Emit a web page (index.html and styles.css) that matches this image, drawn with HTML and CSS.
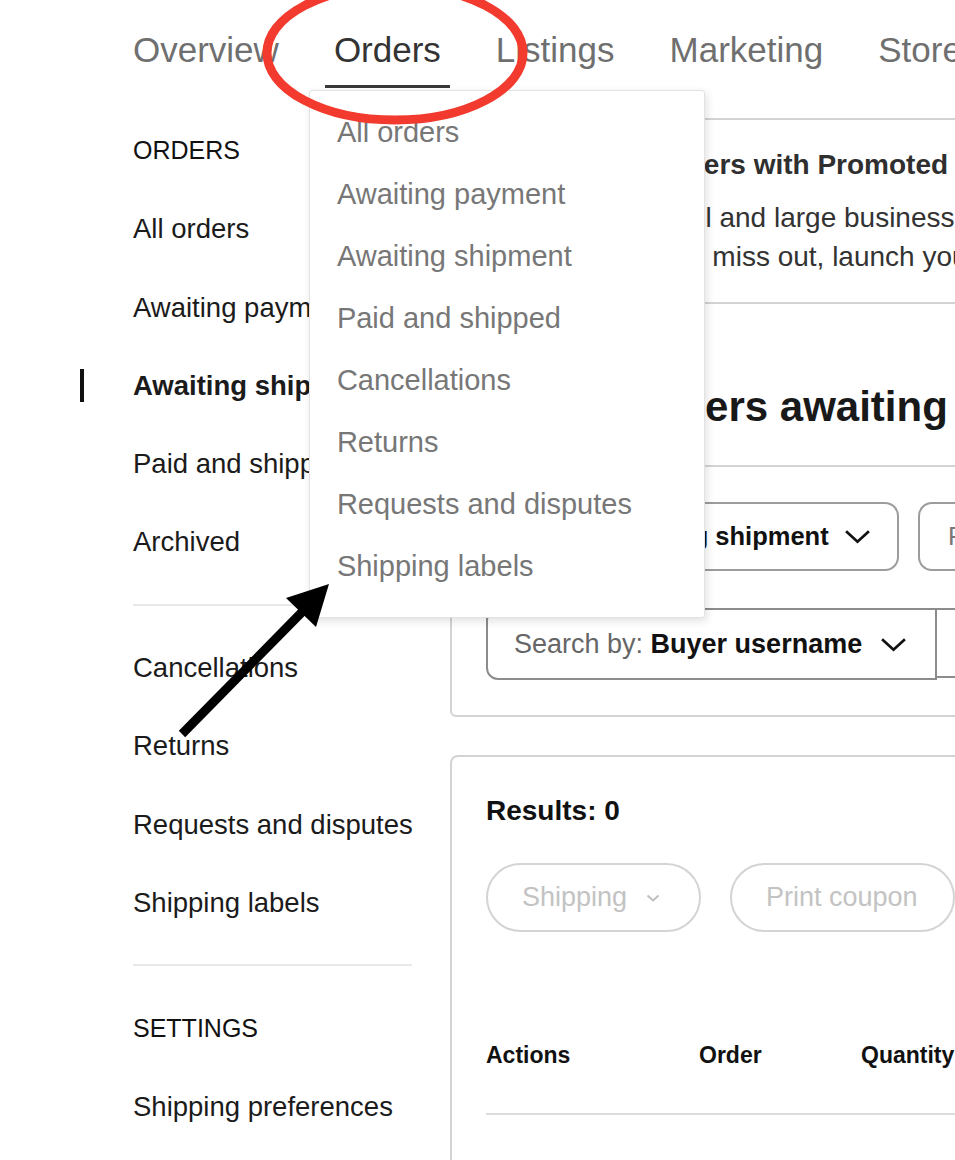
FILE: index.html
```html
<!DOCTYPE html>
<html lang="en">
<head>
<meta charset="utf-8">
<title>Seller Hub - Orders</title>
<link rel="stylesheet" href="styles.css">
</head>
<body>
<div class="page">
  <nav class="topnav">
    <a class="tab">Overview</a>
    <div class="tab tab-active">Orders
      <ul class="menu">
        <li>All orders</li>
        <li>Awaiting payment</li>
        <li>Awaiting shipment</li>
        <li>Paid and shipped</li>
        <li>Cancellations</li>
        <li>Returns</li>
        <li>Requests and disputes</li>
        <li>Shipping labels</li>
      </ul>
    </div>
    <a class="tab">Listings</a>
    <a class="tab">Marketing</a>
    <a class="tab">Store</a>
  </nav>

  <div class="layout">
    <aside class="sidebar">
      <div class="side-head">ORDERS</div>
      <a class="side-link">All orders</a>
      <a class="side-link">Awaiting payment</a>
      <a class="side-link side-active">Awaiting shipment</a>
      <a class="side-link">Paid and shipped</a>
      <a class="side-link">Archived</a>
      <hr class="side-divider">
      <a class="side-link">Cancellations</a>
      <a class="side-link">Returns</a>
      <a class="side-link">Requests and disputes</a>
      <a class="side-link">Shipping labels</a>
      <hr class="side-divider">
      <div class="side-head">SETTINGS</div>
      <a class="side-link">Shipping preferences</a>
    </aside>

    <main class="main">
      <section class="banner">
        <h2 class="banner-title">Reach more buyers with Promoted Listings</h2>
        <p class="banner-text">It helps both small and large businesses reach<br>new orders. Don't miss out, launch your campaign today.</p>
      </section>

      <h1 class="page-title">Review orders awaiting shipment</h1>

      <section class="panel filters">
        <div class="filter-row">
          <button class="select-btn"><span class="sel-label">Status:&nbsp;</span><b>Awaiting shipment</b>
            <svg class="chev" viewBox="0 0 26 14"><path d="M2 2 L13 12 L24 2"/></svg>
          </button>
          <button class="select-btn select-muted">Filter</button>
        </div>
        <div class="search-row">
          <div class="search-by"><span class="sel-label">Search by:&nbsp;</span><b>Buyer username</b>
            <svg class="chev" viewBox="0 0 26 14"><path d="M2 2 L13 12 L24 2"/></svg>
          </div>
          <div class="search-input"></div>
        </div>
      </section>

      <section class="panel results">
        <h3 class="results-title">Results: 0</h3>
        <div class="pill-row">
          <button class="pill">Shipping
            <svg class="chev-sm" viewBox="0 0 14 8"><path d="M1.5 1.5 L7 6.5 L12.5 1.5"/></svg>
          </button>
          <button class="pill">Print coupon</button>
        </div>
        <div class="table-head">
          <span>Actions</span>
          <span>Order</span>
          <span>Quantity</span>
        </div>
      </section>
    </main>
  </div>

  <svg class="annotations" viewBox="0 0 955 1160" width="955" height="1160">
    <ellipse cx="395" cy="53" rx="128" ry="67" fill="none" stroke="#f23a2e" stroke-width="9"/>
    <line x1="182" y1="734" x2="306" y2="608" stroke="#000" stroke-width="9"/>
    <polygon points="329,584 286,598 316,627" fill="#000"/>
  </svg>
</div>
</body>
</html>
```
FILE: styles.css
```css
html, body {
  margin: 0;
  padding: 0;
  background: #fff;
  overflow: hidden;
}

body {
  font-family: "Liberation Sans", Arial, sans-serif;
  color: #191919;
}

.page {
  position: relative;
  width: 955px;
  height: 1160px;
  overflow: hidden;
}

/* ---------- top navigation ---------- */
.topnav {
  display: flex;
  gap: 37px;
  padding: 30px 0 0 124px;
  white-space: nowrap;
}

.tab {
  position: relative;
  font-size: 35px;
  line-height: 40px;
  padding: 0 9px 15px;
  border-bottom: 3px solid transparent;
  color: #6f6f6f;
}

.tab-active {
  color: #333;
  border-bottom-color: #3a3a3a;
}

.menu {
  position: absolute;
  top: calc(100% + 5px);
  left: -16px;
  margin: 0;
  padding: 10px 0 20px 27px;
  box-sizing: border-box;
  width: 396px;
  list-style: none;
  background: #fff;
  border: 1px solid #e2e2e2;
  border-radius: 3px;
  box-shadow: 2px 3px 8px rgba(0, 0, 0, 0.12);
  z-index: 10;
}

.menu li {
  font-size: 29px;
  line-height: 62px;
  color: #777;
}

/* ---------- layout ---------- */
.layout {
  display: grid;
  grid-template-columns: 370px 620px;
  padding-left: 80px;
  margin-top: 30px;
}

/* ---------- sidebar ---------- */
.sidebar {
  display: flex;
  flex-direction: column;
  gap: 45.3px;
  padding-top: 16px;
  white-space: nowrap;
}

.side-head {
  font-size: 25px;
  line-height: 33px;
  padding-left: 53px;
  color: #111;
}

.side-link {
  display: block;
  font-size: 27.5px;
  line-height: 33px;
  border-left: 4px solid transparent;
  padding-left: 49px;
  color: #1b1b1b;
}

.side-active {
  font-weight: bold;
  border-left-color: #111;
}

.side-divider {
  border: none;
  height: 2px;
  width: 279px;
  margin: 0 0 0 53px;
  background: #e9e9e9;
}

/* ---------- main ---------- */
.main {
  display: flex;
  flex-direction: column;
}

.banner {
  border: 2px solid #d3d3d3;
  padding: 27px 0 26px 34px;
  white-space: nowrap;
}

.banner-title {
  margin: 0;
  font-size: 28px;
  line-height: 36px;
  font-weight: bold;
  color: #2f2f2f;
}

.banner-text {
  margin: 15px 0 0;
  font-size: 28px;
  line-height: 39px;
  color: #333;
}

.page-title {
  margin: 78px 0 33px 31px;
  font-size: 42px;
  line-height: 50px;
  font-weight: bold;
  color: #191919;
  white-space: nowrap;
}

.panel {
  border: 2px solid #d3d3d3;
  padding-left: 34px;
}

.filters {
  border-radius: 0 0 0 6px;
  padding-top: 35px;
  padding-bottom: 35px;
  display: flex;
  flex-direction: column;
  gap: 37px;
}

.filter-row {
  display: flex;
  gap: 19px;
}

button {
  font-family: inherit;
  background: #fff;
  margin: 0;
}

.select-btn {
  display: flex;
  align-items: center;
  flex-shrink: 0;
  box-sizing: border-box;
  width: 413px;
  height: 69px;
  padding: 0 28px;
  border: 2px solid #9c9c9c;
  border-radius: 14px;
  font-size: 25.5px;
  color: #111;
  white-space: nowrap;
  overflow: hidden;
}

.select-muted {
  width: 200px;
  color: #777;
}

.sel-label {
  font-weight: normal;
  color: #666;
}

.chev {
  flex-shrink: 0;
  width: 27px;
  height: 15px;
  margin-left: 15px;
  fill: none;
  stroke: #111;
  stroke-width: 2.6;
}

.search-row {
  display: flex;
}

.search-by {
  display: flex;
  align-items: center;
  flex-shrink: 0;
  box-sizing: border-box;
  width: 451px;
  height: 72px;
  padding-left: 26px;
  border: 2px solid #8c8c8c;
  border-radius: 12px 0 0 12px;
  font-size: 27px;
  color: #111;
  white-space: nowrap;
}

.search-by .chev {
  margin-left: 18px;
}

.search-input {
  flex-shrink: 0;
  box-sizing: border-box;
  width: 300px;
  height: 70px;
  border: 2px solid #8c8c8c;
  border-left: none;
  border-radius: 0 12px 12px 0;
}

.results {
  margin-top: 38px;
  border-bottom: none;
  border-radius: 8px 8px 0 0;
  padding-top: 36px;
  height: 420px;
}

.results-title {
  margin: 0;
  font-size: 28px;
  line-height: 36px;
  font-weight: bold;
  color: #111;
}

.pill-row {
  display: flex;
  gap: 29px;
  margin-top: 34px;
}

.pill {
  display: flex;
  align-items: center;
  flex-shrink: 0;
  box-sizing: border-box;
  height: 69px;
  padding: 0 35px 0 34px;
  border: 2px solid #d4d4d4;
  border-radius: 35px;
  font-size: 27px;
  color: #c3c3c3;
  white-space: nowrap;
}

.pill:first-child {
  width: 215px;
}

.chev-sm {
  flex-shrink: 0;
  width: 14px;
  height: 8px;
  margin-left: 19px;
  fill: none;
  stroke: #bdbdbd;
  stroke-width: 1.8;
}

.table-head {
  display: grid;
  grid-template-columns: 213px 162px 1fr;
  margin-top: 108px;
  padding-bottom: 43px;
  border-bottom: 2px solid #dcdcdc;
  font-size: 23px;
  line-height: 30px;
  font-weight: bold;
  color: #111;
  white-space: nowrap;
}

/* ---------- annotations ---------- */
.annotations {
  position: absolute;
  top: 0;
  left: 0;
  pointer-events: none;
  z-index: 20;
}
```
